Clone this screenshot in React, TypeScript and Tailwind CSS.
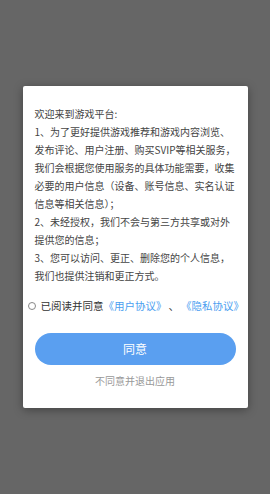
import React, { useState } from 'react';

const lines = [
  '欢迎来到游戏平台:',
  '1、为了更好提供游戏推荐和游戏内容浏览、',
  '发布评论、用户注册、购买SVIP等相关服务，',
  '我们会根据您使用服务的具体功能需要，收集',
  '必要的用户信息（设备、账号信息、实名认证',
  '信息等相关信息）；',
  '2、未经授权，我们不会与第三方共享或对外',
  '提供您的信息；',
  '3、您可以访问、更正、删除您的个人信息，',
  '我们也提供注销和更正方式。',
];

export default function App() {
  const [checked, setChecked] = useState(false);

  return (
    <div
      className="min-h-screen bg-[#666666] flex items-center justify-center"
      style={{ fontFamily: '"Noto Sans CJK SC", "Noto Sans", sans-serif' }}
    >
      <div className="w-[225px] bg-white rounded-[2px] shadow-[0_2px_10px_rgba(0,0,0,0.35)] pt-[19px] pb-[20px]">
        <div className="px-[12px] text-[10px] leading-[18px] text-[#444444] whitespace-nowrap">
          {lines.map((l, i) => (
            <div key={i}>{l}</div>
          ))}
        </div>

        <div className="mt-[12px] pl-[5px] flex items-center h-[18px] text-[10.5px] whitespace-nowrap">
          <button
            onClick={() => setChecked(!checked)}
            className="w-[8px] h-[8px] rounded-full border border-[#888888] flex items-center justify-center shrink-0"
          >
            {checked && <span className="w-[4px] h-[4px] rounded-full bg-[#4a9ef0]" />}
          </button>
          <span className="ml-[5px] text-[#333333]">已阅读并同意</span>
          <span className="text-[#4a9ef0]">《用户协议》</span>
          <span className="text-[#333333] mx-[2px]">、</span>
          <span className="text-[#4a9ef0]">《隐私协议》</span>
        </div>

        <div className="px-[12px] mt-[18px]">
          <button className="w-full h-[32px] rounded-full bg-[#5a9ff0] text-white text-[12px]">
            同意
          </button>
        </div>

        <div className="mt-[9px] text-center text-[10px] leading-[14px] text-[#999999]">
          不同意并退出应用
        </div>
      </div>
    </div>
  );
}
